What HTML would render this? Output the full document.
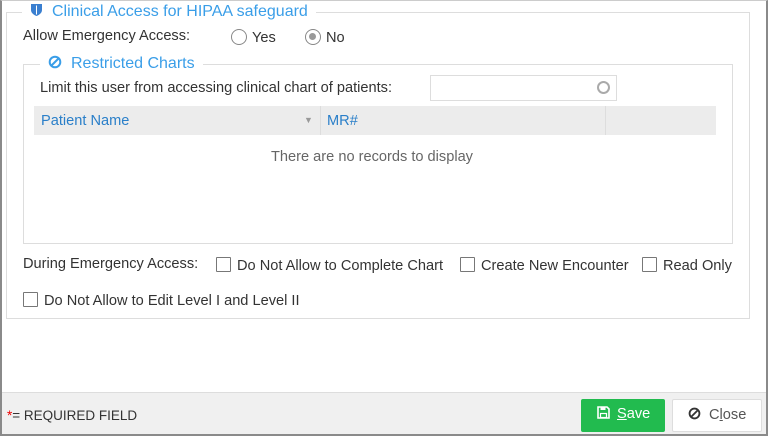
<!DOCTYPE html>
<html><head><style>
*{box-sizing:border-box;margin:0;padding:0}
body{width:768px;height:436px;background:#fff;font-family:"Liberation Sans",sans-serif;font-size:14.6px;color:#333;position:relative;overflow:hidden}
.frame{position:absolute;left:0;top:0;width:768px;height:436px;border:2px solid #8a8a8a;border-top:1px solid #ccc}
.abs{position:absolute;white-space:nowrap}
.fs{position:absolute;border:1px solid #ddd}
.leg{position:absolute;background:#fff;color:#3a9ee8;font-size:16px;padding:0 8px}
.radio{display:inline-block;width:16px;height:16px;border:1.5px solid #888;border-radius:50%;vertical-align:-3px;margin-right:5px;position:relative}
.radio.on::after{content:"";position:absolute;left:3px;top:3px;width:7px;height:7px;border-radius:50%;background:#999}
.cb{display:inline-block;width:15px;height:15px;border:1.5px solid #777;vertical-align:-2px;margin-right:6px;border-radius:1px}
</style></head><body>
<div class="frame"></div>
<div class="fs" style="left:6px;top:12px;width:744px;height:307px"></div>
<div class="leg" style="left:22px;top:3px"><svg width="13" height="14" viewBox="0 0 13 14" style="vertical-align:-1px;margin-right:9px"><path d="M1 1h11v6c0 3-3 5-5.5 6C4 12 1 10 1 7z" fill="#3a7fd0"/><path d="M6.5 2.5v9" stroke="#fff" stroke-width="1"/></svg>Clinical Access for HIPAA safeguard</div>
<div class="abs" style="left:23px;top:28px">Allow Emergency Access:</div>
<div class="abs" style="left:231px;top:29px"><span class="radio"></span>Yes</div>
<div class="abs" style="left:305px;top:29px"><span class="radio on"></span>No</div>
<div class="fs" style="left:23px;top:64px;width:710px;height:180px"></div>
<div class="leg" style="left:40px;top:55px"><svg width="14" height="14" viewBox="0 0 14 14" style="vertical-align:-1px;margin-right:9px"><circle cx="7" cy="7" r="5.3" fill="none" stroke="#3a9ee8" stroke-width="2"/><path d="M3.5 10.5l7-7" stroke="#3a9ee8" stroke-width="2"/></svg>Restricted Charts</div>
<div class="abs" style="left:40px;top:80px">Limit this user from accessing clinical chart of patients:</div>
<div class="abs" style="left:430px;top:75px;width:187px;height:26px;border:1px solid #ddd"><span style="position:absolute;right:6px;top:5px;width:13px;height:13px;border:2px solid #aaa;border-radius:50%"></span></div>
<div class="abs" style="left:34px;top:106px;width:682px;height:29px;background:#ececec"></div>
<div class="abs" style="left:320px;top:106px;width:1px;height:29px;background:#ddd"></div>
<div class="abs" style="left:605px;top:106px;width:1px;height:29px;background:#ddd"></div>
<div class="abs" style="left:41px;top:113px;color:#2a7fc9">Patient Name</div>
<div class="abs" style="left:304px;top:115px;color:#999;font-size:9px">▼</div>
<div class="abs" style="left:327px;top:113px;color:#2a7fc9">MR#</div>
<div class="abs" style="left:271px;top:149px;color:#666">There are no records to display</div>
<div class="abs" style="left:23px;top:256px">During Emergency Access:</div>
<div class="abs" style="left:216px;top:257px"><span class="cb"></span>Do Not Allow to Complete Chart</div>
<div class="abs" style="left:460px;top:257px"><span class="cb"></span>Create New Encounter</div>
<div class="abs" style="left:642px;top:257px"><span class="cb"></span>Read Only</div>
<div class="abs" style="left:23px;top:292px"><span class="cb"></span>Do Not Allow to Edit Level I and Level II</div>
<div class="abs" style="left:2px;top:392px;width:764px;height:42px;background:#f0f0f0;border-top:1px solid #ddd"></div>
<div class="abs" style="left:7px;top:408px;font-size:13.5px"><span style="color:#e00">*</span>= REQUIRED FIELD</div>
<div class="abs" style="left:581px;top:399px;width:84px;height:33px;background:#22bb4f;border-radius:2px;color:#fff;padding:7px 0 0 16px"><svg width="13" height="13" viewBox="0 0 13 13" style="vertical-align:-1px;margin-right:7px"><path d="M1 1h9l2 2v9H1z" fill="none" stroke="#fff" stroke-width="1.6"/><rect x="3.5" y="1" width="5" height="3" fill="#fff"/><rect x="3.5" y="7.5" width="6" height="4" fill="none" stroke="#fff" stroke-width="1.2"/></svg><u>S</u>ave</div>
<div class="abs" style="left:672px;top:399px;width:90px;height:33px;background:#fff;border:1px solid #ddd;border-radius:2px;color:#555;padding:7px 0 0 15px"><svg width="13" height="13" viewBox="0 0 14 14" style="vertical-align:-1px;margin-right:8px"><circle cx="7" cy="7" r="5.3" fill="none" stroke="#333" stroke-width="2"/><path d="M3.5 10.5l7-7" stroke="#333" stroke-width="2"/></svg>C<u>l</u>ose</div>
</body></html>
